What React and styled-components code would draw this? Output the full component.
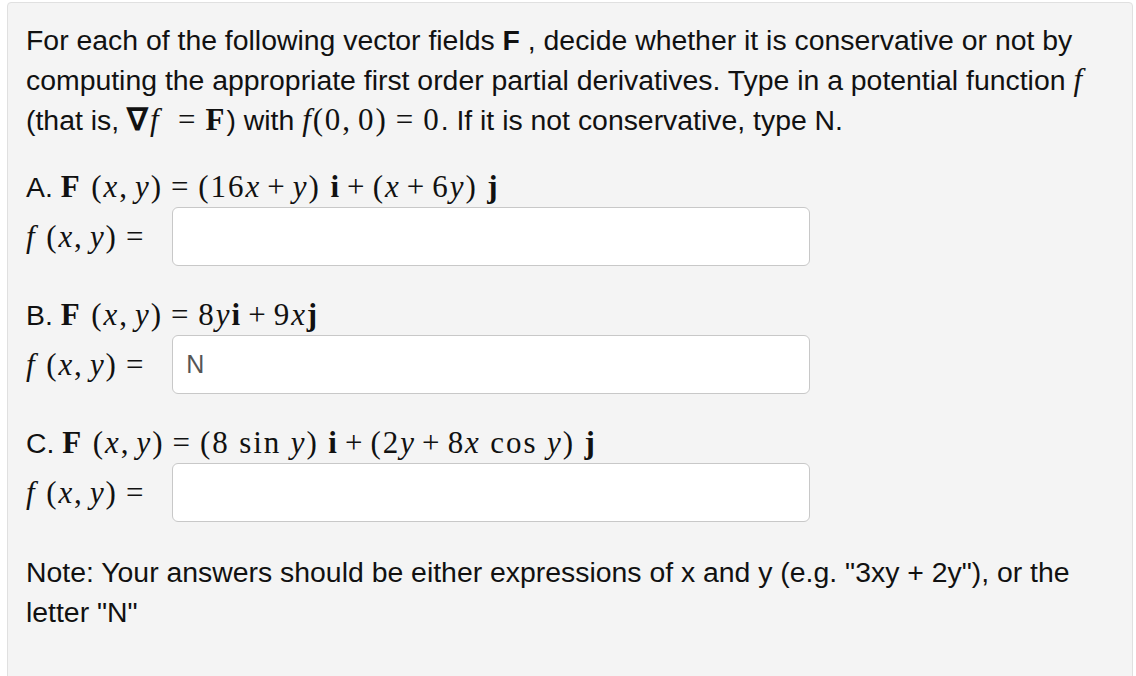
import styled, { createGlobalStyle } from "styled-components";

const Global = createGlobalStyle`
  html, body { margin: 0; padding: 0; background: #ffffff; }
  body { overflow: hidden; }
`;

const Panel = styled.div`
  margin: 2px 0 0 7px;
  width: 1126px;
  height: 720px;
  box-sizing: border-box;
  background: #f4f4f4;
  border: 1px solid #e0e0e0;
  border-radius: 4px;
  padding: 17px 18px;
  font-family: "Liberation Sans", Arial, Helvetica, sans-serif;
  font-size: 28.4px;
  color: #111;
`;

const Intro = styled.p`
  margin: 0;
  line-height: 40px;
  white-space: nowrap;
`;

const Problem = styled.div`
  margin-top: ${(p) => p.$top}px;
  display: flex;
  flex-direction: column;
  gap: 4px;
`;

const Title = styled.div`
  line-height: 32px;
  white-space: nowrap;
`;

const Row = styled.div`
  display: flex;
  align-items: center;
  gap: 19px;
`;

const Math = styled.span`
  font-family: "Liberation Serif", "Times New Roman", serif;
  font-size: 31px;
  letter-spacing: 1.9px;
  line-height: 1;
  white-space: nowrap;
`;

const V = styled.i`
  font-style: italic;
`;

const B = styled.b`
  font-weight: 700;
`;

const Op = styled.span`
  margin: 0 ${(p) => (p.$rel ? "0.26em" : "0.2em")};
`;

const Comma = styled.span`
  margin-right: 0.2em;
`;

const Answer = styled.input`
  width: 638px;
  height: 59px;
  box-sizing: border-box;
  border: 1px solid #c8c8c8;
  border-radius: 6px;
  background: #fff;
  padding: 0 13px;
  font-family: "Liberation Sans", Arial, sans-serif;
  font-size: 25px;
  color: #555;
  outline: none;
`;

const Note = styled.p`
  margin: 30px 0 0;
  line-height: 40px;
  white-space: nowrap;
`;

function XY() {
  return (
    <>
      (<V>x</V><Comma>,</Comma><V>y</V>)
    </>
  );
}

function FLabel() {
  return (
    <Math>
      <V>f</V> <XY /><Op $rel>=</Op>
    </Math>
  );
}

function Block({ letter, top, value, children }) {
  return (
    <Problem $top={top}>
      <Title>
        {letter}. <Math><B>F</B> <XY /><Op $rel>=</Op>{children}</Math>
      </Title>
      <Row>
        <FLabel />
        <Answer defaultValue={value} />
      </Row>
    </Problem>
  );
}

export default function App() {
  return (
    <>
      <Global />
      <Panel>
        <Intro>
          For each of the following vector fields <B>F</B> , decide whether it is conservative or not by
          <br />
          computing the appropriate first order partial derivatives. Type in a potential function{" "}
          <Math><V>f</V></Math>
          <br />
          (that is, <Math><B>∇</B><V>f</V> <Op $rel>=</Op><B>F</B></Math>) with{" "}
          <Math><V>f</V>(0<Comma>,</Comma>0)<Op $rel>=</Op>0</Math>. If it is not conservative, type N.
        </Intro>
        <Block letter="A" top={31} value="">
          (16<V>x</V><Op>+</Op><V>y</V>) <B>i</B><Op>+</Op>(<V>x</V><Op>+</Op>6<V>y</V>) <B>j</B>
        </Block>
        <Block letter="B" top={33} value="N">
          8<V>y</V><B>i</B><Op>+</Op>9<V>x</V><B>j</B>
        </Block>
        <Block letter="C" top={33} value="">
          (8 sin <V>y</V>) <B>i</B><Op>+</Op>(2<V>y</V><Op>+</Op>8<V>x</V> cos <V>y</V>) <B>j</B>
        </Block>
        <Note>
          Note: Your answers should be either expressions of x and y (e.g. "3xy + 2y"), or the
          <br />
          letter "N"
        </Note>
      </Panel>
    </>
  );
}
